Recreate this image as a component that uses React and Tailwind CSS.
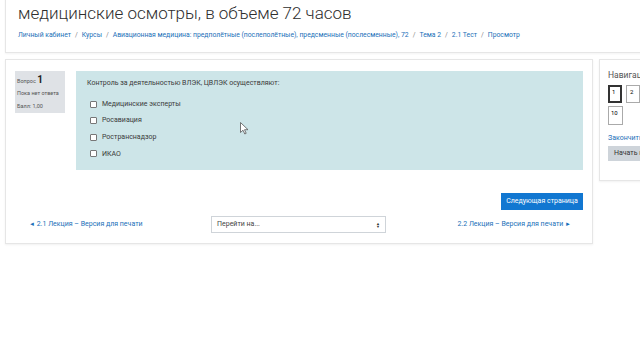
import React from "react";

const opts = ["Медицинские эксперты", "Росавиация", "Ространснадзор", "ИКАО"];

function Cursor() {
  return (
    <svg className="absolute left-[240px] top-[122px]" width="9" height="13" viewBox="0 0 9 13">
      <path d="M0.5 0.5 L0.5 10.5 L3 8.2 L4.8 12 L6.2 11.3 L4.5 7.7 L8 7.7 Z" fill="#fff" stroke="#555" strokeWidth="0.8" />
    </svg>
  );
}

export default function App() {
  return (
    <div
      className="relative h-[360px] w-[640px] overflow-hidden bg-white px-[5px]"
      style={{ fontFamily: 'Roboto, "Liberation Sans", sans-serif' }}
    >
      <div className="mt-[-40px] mr-[-20px] border border-[#e6e6e6] bg-white pl-[12px] pt-[10px] pb-[11px] shadow-[0_1px_2px_rgba(0,0,0,0.05)]">
        <h1 className="whitespace-nowrap text-[17px] leading-[28px] font-light text-[#2e2e2e]">
          Авиационная медицина: предполётные (послеполётные), предсменные (послесменные),
          <br />
          медицинские осмотры, в объеме 72 часов
        </h1>
        <div className="mt-[2px] flex gap-[4px] text-[6.8px] leading-[12px] text-[#1a6fb8]">
          <span>Личный кабинет</span>
          <span className="text-[#888]">/</span>
          <span>Курсы</span>
          <span className="text-[#888]">/</span>
          <span>Авиационная медицина: предполётные (послеполётные), предсменные (послесменные), 72</span>
          <span className="text-[#888]">/</span>
          <span>Тема 2</span>
          <span className="text-[#888]">/</span>
          <span>2.1 Тест</span>
          <span className="text-[#888]">/</span>
          <span>Просмотр</span>
        </div>
      </div>

      <div className="mt-[6px] flex gap-[6px]">
        <div className="w-[588px] shrink-0 border border-[#e6e6e6] px-[9px] pt-[11px] pb-[10px] shadow-[0_1px_2px_rgba(0,0,0,0.06)]">
          <div className="flex gap-[11px]">
            <div className="h-[42px] w-[50px] shrink-0 whitespace-nowrap bg-[#dfe2e6] px-[2px] pt-[3px] text-[5.5px] leading-[12px] text-[#555]">
              <div>
                Вопрос <b className="text-[10px] text-[#222]">1</b>
              </div>
              <div>Пока нет ответа</div>
              <div className="mt-[1px]">Балл: 1,00</div>
            </div>
            <div className="h-[99px] flex-1 bg-[#cde5e8] pl-[11px] pt-[6px] text-[7px] text-[#3a3a3a]">
              <div className="leading-[12px]">Контроль за деятельностью ВЛЭК, ЦВЛЭК осуществляют:</div>
              <div className="mt-[9px] flex flex-col gap-[4.6px] pl-[3px]">
                {opts.map((o) => (
                  <div key={o} className="flex h-[12px] items-center gap-[5px]">
                    <span className="h-[7px] w-[7px] rounded-[1px] border border-[#777] bg-white" />
                    <span>{o}</span>
                  </div>
                ))}
              </div>
            </div>
          </div>

          <div className="mt-[23px] flex justify-end">
            <button className="h-[17px] w-[82px] bg-[#1177d1] text-[7px] text-white">Следующая страница</button>
          </div>

          <div className="mt-[6px] flex items-center text-[7px] text-[#1a6fb8]">
            <div className="w-[196px] pl-[14px]">
              <span className="text-[6px]">◄</span> 2.1 Лекция – Версия для печати
            </div>
            <div className="flex h-[17px] w-[175px] items-center justify-between border border-[#cfd4d9] bg-white px-[5px] text-[7px] text-[#444]">
              <span>Перейти на...</span>
              <span className="flex flex-col text-[4px] leading-[3px] text-[#333]">
                <span>▲</span>
                <span>▼</span>
              </span>
            </div>
            <div className="flex flex-1 justify-end pr-[12px]">
              <span>
                2.2 Лекция – Версия для печати <span className="text-[6px]">►</span>
              </span>
            </div>
          </div>
        </div>

        <div className="h-[122px] w-[80px] shrink-0 border border-[#e6e6e6] pl-[8px] pt-[9px] shadow-[0_1px_2px_rgba(0,0,0,0.06)]">
          <div className="whitespace-nowrap text-[8.5px] leading-[12px] text-[#555]">Навигация по тесту</div>
          <div className="mt-[4px] flex gap-[4px]">
            <div className="h-[18px] w-[14px] border-[2px] border-[#333] pl-[2px] text-[6px] leading-[9px] text-black">1</div>
            <div className="h-[18px] w-[14px] border border-[#aaa] pl-[3px] pt-[1px] text-[6px] leading-[9px] text-black">2</div>
          </div>
          <div className="mt-[3px] h-[19px] w-[15px] border border-[#aaa] pl-[2px] pt-[1px] text-[6px] leading-[9px] text-black">10</div>
          <div className="mt-[7px] whitespace-nowrap text-[7px] leading-[12px] text-[#1a6fb8]">Закончить попытку...</div>
          <div className="mt-[2px] flex h-[15px] items-center whitespace-nowrap bg-[#ced4da] pl-[6px] text-[7px] text-[#333]">
            Начать новый просмотр
          </div>
        </div>
      </div>

      <Cursor />
    </div>
  );
}
